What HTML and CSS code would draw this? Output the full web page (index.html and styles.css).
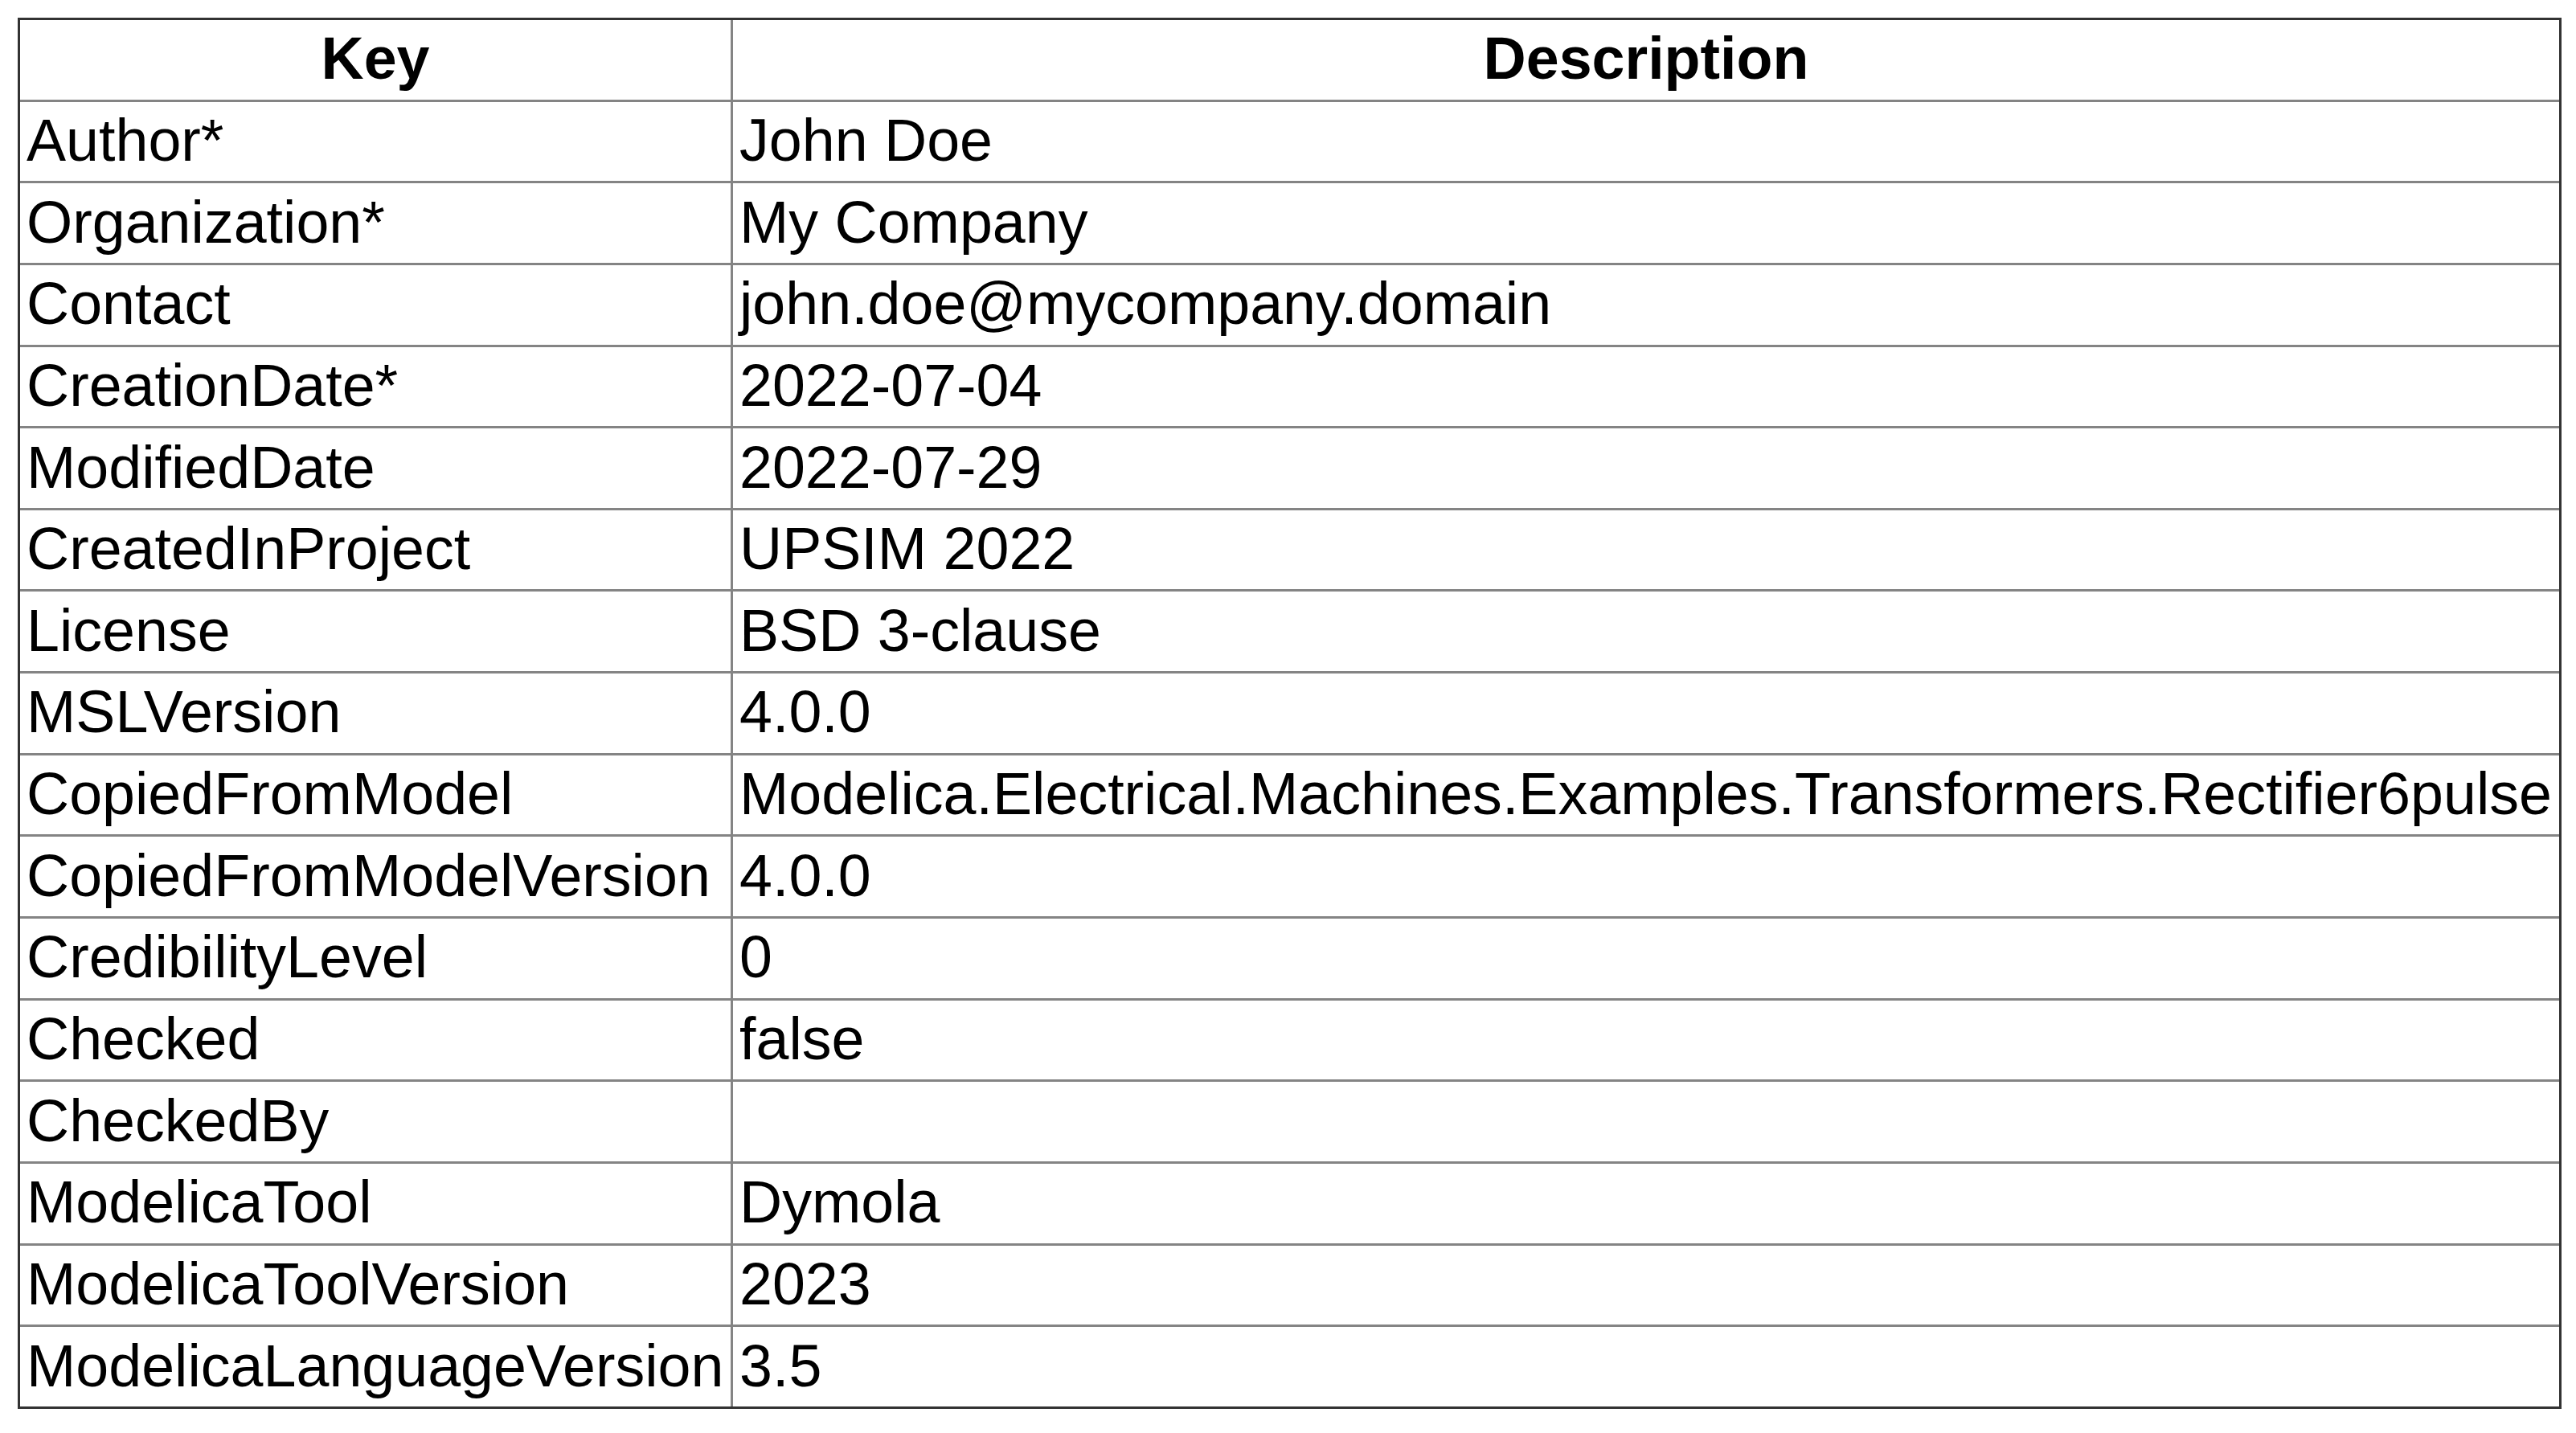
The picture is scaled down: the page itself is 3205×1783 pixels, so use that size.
FILE: index.html
```html
<!DOCTYPE html>
<html lang="en">
<head>
<meta charset="utf-8">
<title>Model metadata</title>
<link rel="stylesheet" href="styles.css">
</head>
<body>
<table class="meta">
  <thead>
    <tr><th class="key">Key</th><th class="desc">Description</th></tr>
  </thead>
  <tbody>
    <tr><td class="key">Author*</td><td class="desc">John Doe</td></tr>
    <tr><td class="key">Organization*</td><td class="desc">My Company</td></tr>
    <tr><td class="key">Contact</td><td class="desc">john.doe@mycompany.domain</td></tr>
    <tr><td class="key">CreationDate*</td><td class="desc">2022-07-04</td></tr>
    <tr><td class="key">ModifiedDate</td><td class="desc">2022-07-29</td></tr>
    <tr><td class="key">CreatedInProject</td><td class="desc">UPSIM 2022</td></tr>
    <tr><td class="key">License</td><td class="desc">BSD 3-clause</td></tr>
    <tr><td class="key">MSLVersion</td><td class="desc">4.0.0</td></tr>
    <tr><td class="key">CopiedFromModel</td><td class="desc">Modelica.Electrical.Machines.Examples.Transformers.Rectifier6pulse</td></tr>
    <tr><td class="key">CopiedFromModelVersion</td><td class="desc">4.0.0</td></tr>
    <tr><td class="key">CredibilityLevel</td><td class="desc">0</td></tr>
    <tr><td class="key">Checked</td><td class="desc">false</td></tr>
    <tr><td class="key">CheckedBy</td><td class="desc"></td></tr>
    <tr><td class="key">ModelicaTool</td><td class="desc">Dymola</td></tr>
    <tr><td class="key">ModelicaToolVersion</td><td class="desc">2023</td></tr>
    <tr><td class="key">ModelicaLanguageVersion</td><td class="desc">3.5</td></tr>
  </tbody>
</table>
</body>
</html>
```
FILE: styles.css
```css
html, body {
  margin: 0;
  padding: 0;
  background: #ffffff;
}

body {
  padding: 22px;
  font-family: "Liberation Sans", Arial, sans-serif;
  color: #000000;
}

.meta {
  table-layout: fixed;
  width: 3165px;
  border: 3px solid #333333;
  border-collapse: separate;
  border-spacing: 0;
  font-size: 73.6px;
}

.meta th,
.meta td {
  box-sizing: border-box;
  padding: 0 8px 3px 8px;
  vertical-align: middle;
  line-height: normal;
  white-space: nowrap;
  overflow: visible;
  height: 101.65px;
  border-top: 3px solid #848484;
}

.meta thead th {
  height: 98.65px;
  border-top: none;
  font-weight: bold;
  text-align: center;
}

.meta td {
  text-align: left;
  font-weight: normal;
}

.meta .key {
  width: 887px;
  border-right: 3px solid #848484;
}

.meta .desc {
  width: 2272px;
}
```
